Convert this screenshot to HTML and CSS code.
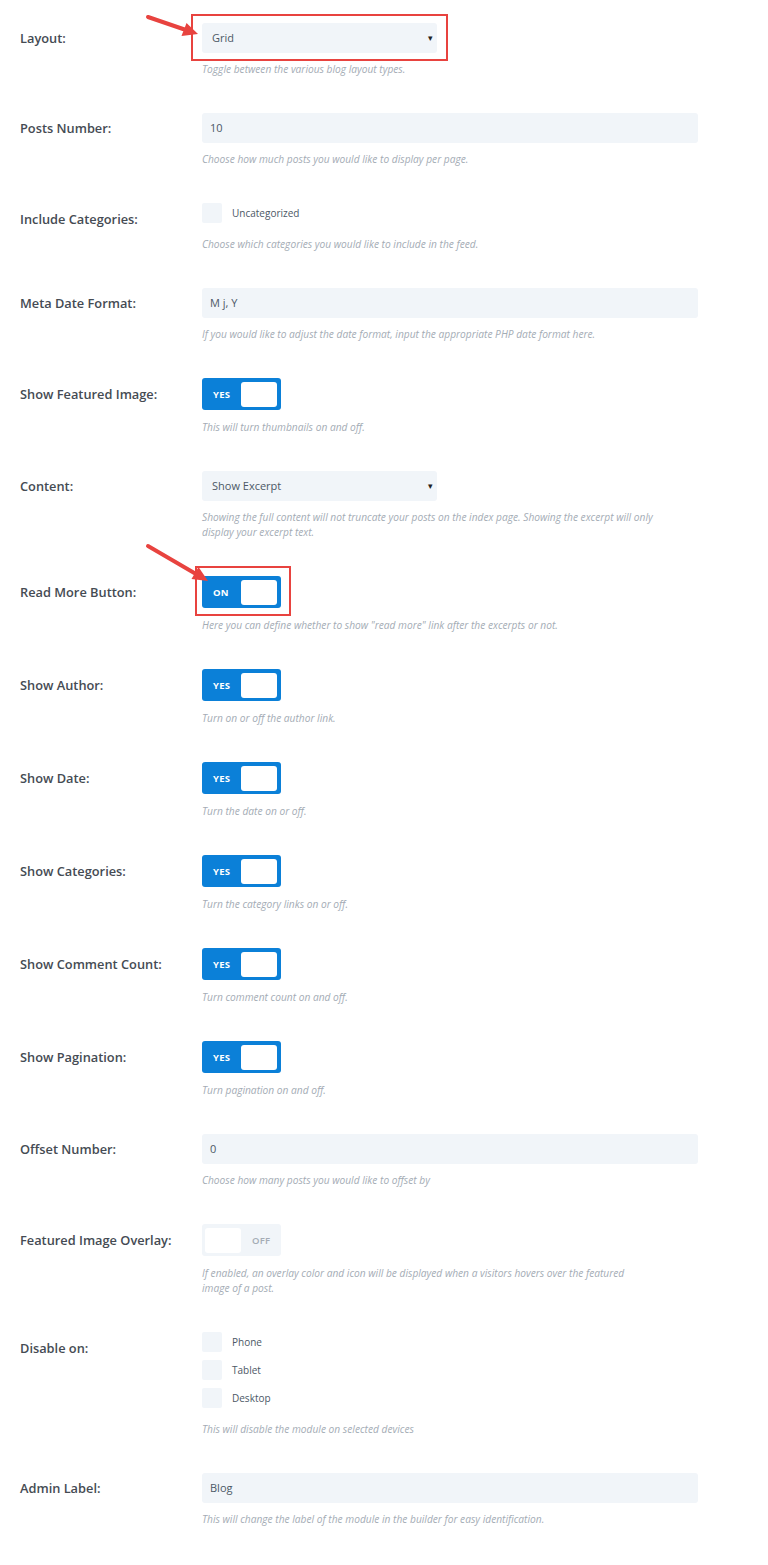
FILE: index.html
```html
<!DOCTYPE html>
<html lang="en">
<head>
<meta charset="utf-8">
<title>Blog Module Settings</title>
<link rel="stylesheet" href="styles.css">
</head>
<body>
<div class="page">
  <div class="row">
    <div class="label lh30">Layout:</div>
    <div class="ctl">
      <div class="select mark">Grid<span class="caret">&#9662;</span></div>
      <div class="desc dm-input">Toggle between the various blog layout types.</div>
    </div>
  </div>

  <div class="row">
    <div class="label lh30">Posts Number:</div>
    <div class="ctl">
      <div class="input">10</div>
      <div class="desc dm-input">Choose how much posts you would like to display per page.</div>
    </div>
  </div>

  <div class="row">
    <div class="label lh32">Include Categories:</div>
    <div class="ctl">
      <div class="checks">
        <div class="check"><span class="box"></span><span class="ctext">Uncategorized</span></div>
      </div>
      <div class="desc dm-check">Choose which categories you would like to include in the feed.</div>
    </div>
  </div>

  <div class="row">
    <div class="label lh30">Meta Date Format:</div>
    <div class="ctl">
      <div class="input">M j, Y</div>
      <div class="desc dm-input">If you would like to adjust the date format, input the appropriate PHP date format here.</div>
    </div>
  </div>

  <div class="row">
    <div class="label lh32">Show Featured Image:</div>
    <div class="ctl">
      <div class="toggle on"><span class="ttext">YES</span><span class="knob"></span></div>
      <div class="desc dm-toggle">This will turn thumbnails on and off.</div>
    </div>
  </div>

  <div class="row">
    <div class="label lh30">Content:</div>
    <div class="ctl">
      <div class="select">Show Excerpt<span class="caret">&#9662;</span></div>
      <div class="desc dm-input wrap-content">Showing the full content will not truncate your posts on the index page. Showing the excerpt will only display your excerpt text.</div>
    </div>
  </div>

  <div class="row">
    <div class="label lh32">Read More Button:</div>
    <div class="ctl">
      <div class="toggle on mark2"><span class="ttext">ON</span><span class="knob"></span></div>
      <div class="desc dm-toggle">Here you can define whether to show "read more" link after the excerpts or not.</div>
    </div>
  </div>

  <div class="row">
    <div class="label lh32">Show Author:</div>
    <div class="ctl">
      <div class="toggle on"><span class="ttext">YES</span><span class="knob"></span></div>
      <div class="desc dm-toggle">Turn on or off the author link.</div>
    </div>
  </div>

  <div class="row">
    <div class="label lh32">Show Date:</div>
    <div class="ctl">
      <div class="toggle on"><span class="ttext">YES</span><span class="knob"></span></div>
      <div class="desc dm-toggle">Turn the date on or off.</div>
    </div>
  </div>

  <div class="row">
    <div class="label lh32">Show Categories:</div>
    <div class="ctl">
      <div class="toggle on"><span class="ttext">YES</span><span class="knob"></span></div>
      <div class="desc dm-toggle">Turn the category links on or off.</div>
    </div>
  </div>

  <div class="row">
    <div class="label lh32">Show Comment Count:</div>
    <div class="ctl">
      <div class="toggle on"><span class="ttext">YES</span><span class="knob"></span></div>
      <div class="desc dm-toggle">Turn comment count on and off.</div>
    </div>
  </div>

  <div class="row">
    <div class="label lh32">Show Pagination:</div>
    <div class="ctl">
      <div class="toggle on"><span class="ttext">YES</span><span class="knob"></span></div>
      <div class="desc dm-toggle">Turn pagination on and off.</div>
    </div>
  </div>

  <div class="row">
    <div class="label lh30">Offset Number:</div>
    <div class="ctl">
      <div class="input">0</div>
      <div class="desc dm-input">Choose how many posts you would like to offset by</div>
    </div>
  </div>

  <div class="row">
    <div class="label lh32">Featured Image Overlay:</div>
    <div class="ctl">
      <div class="toggle off"><span class="knob"></span><span class="ttext">OFF</span></div>
      <div class="desc dm-toggle narrow">If enabled, an overlay color and icon will be displayed when a visitors hovers over the featured image of a post.</div>
    </div>
  </div>

  <div class="row">
    <div class="label lh32">Disable on:</div>
    <div class="ctl">
      <div class="checks">
        <div class="check"><span class="box"></span><span class="ctext">Phone</span></div>
        <div class="check"><span class="box"></span><span class="ctext">Tablet</span></div>
        <div class="check"><span class="box"></span><span class="ctext">Desktop</span></div>
      </div>
      <div class="desc dm-check">This will disable the module on selected devices</div>
    </div>
  </div>

  <div class="row">
    <div class="label lh30">Admin Label:</div>
    <div class="ctl">
      <div class="input">Blog</div>
      <div class="desc dm-input">This will change the label of the module in the builder for easy identification.</div>
    </div>
  </div>

  <svg class="arrows" viewBox="0 0 768 1565" width="768" height="1565" aria-hidden="true">
    <line x1="148" y1="17" x2="186" y2="30" stroke="#e8433f" stroke-width="4" stroke-linecap="round"/>
    <polygon points="186.5,23 181.5,36 198,34" fill="#e8433f"/>
    <line x1="148" y1="546" x2="196" y2="574" stroke="#e8433f" stroke-width="4" stroke-linecap="round"/>
    <polygon points="198.5,567 191.5,579 208,581" fill="#e8433f"/>
  </svg>
</div>
</body>
</html>
```

FILE: styles.css
```css
html, body {
  margin: 0;
  padding: 0;
  background: #ffffff;
}

body {
  font-family: "Open Sans", "Noto Sans", "Liberation Sans", sans-serif;
  color: #4c5866;
}

.page {
  position: relative;
  width: 768px;
  min-height: 1565px;
  box-sizing: border-box;
  padding: 23px 0 0 20px;
}

.row {
  display: grid;
  grid-template-columns: 182px 496px;
  align-items: start;
  padding-bottom: 36px;
}

.label {
  font-size: 12.8px;
  font-weight: 600;
  color: #454b53;
  white-space: nowrap;
}

.lh30 { line-height: 30px; }
.lh32 { line-height: 32px; }

.ctl {
  display: flex;
  flex-direction: column;
  align-items: flex-start;
}

.input,
.select {
  box-sizing: border-box;
  height: 30px;
  line-height: 30px;
  background: #f1f5f9;
  border-radius: 3px;
  font-size: 11px;
  color: #4c5866;
}

.input {
  width: 496px;
  padding-left: 8px;
}

.select {
  width: 235px;
  padding-left: 10px;
  position: relative;
}

.caret {
  position: absolute;
  right: 4px;
  top: 0;
  font-size: 9px;
  color: #222;
}

.mark::after,
.mark2::after {
  content: "";
  position: absolute;
  border: 2px solid #e8433f;
  pointer-events: none;
}

.mark::after {
  top: -9px;
  bottom: -8px;
  left: -11px;
  right: -11px;
}

.mark2 {
  position: relative;
}

.mark2::after {
  top: -10px;
  bottom: -8px;
  left: -7px;
  right: -10px;
}

.desc {
  font-size: 10.2px;
  line-height: 15px;
  font-style: italic;
  color: #a4acb5;
}

.narrow { max-width: 445px; }
.wrap-content { max-width: 462px; }

.dm-input { margin-top: 9px; }
.dm-toggle { margin-top: 10px; }
.dm-check { margin-top: 14px; }

.toggle {
  box-sizing: border-box;
  width: 79px;
  height: 32px;
  border-radius: 3px;
  display: flex;
  align-items: center;
  padding: 4px;
}

.toggle.on {
  background: #0b80d8;
  justify-content: space-between;
  padding-left: 11px;
}

.toggle.off {
  background: #f1f5f9;
  gap: 11px;
  padding-left: 3px;
}

.ttext {
  font-size: 9.5px;
  font-weight: 700;
  letter-spacing: 0.2px;
}

.toggle.on .ttext { color: #ffffff; }
.toggle.off .ttext { color: #a4acb5; font-weight: 600; }

.knob {
  width: 36px;
  height: 25px;
  background: #ffffff;
  border-radius: 3px;
}

.checks {
  display: flex;
  flex-direction: column;
  gap: 8px;
}

.check {
  display: flex;
  align-items: center;
  height: 20px;
}

.box {
  width: 20px;
  height: 20px;
  background: #f1f5f9;
  border-radius: 2px;
}

.ctext {
  margin-left: 10px;
  font-size: 10px;
  color: #4c5866;
}

.arrows {
  position: absolute;
  left: 0;
  top: 0;
  pointer-events: none;
}
```
